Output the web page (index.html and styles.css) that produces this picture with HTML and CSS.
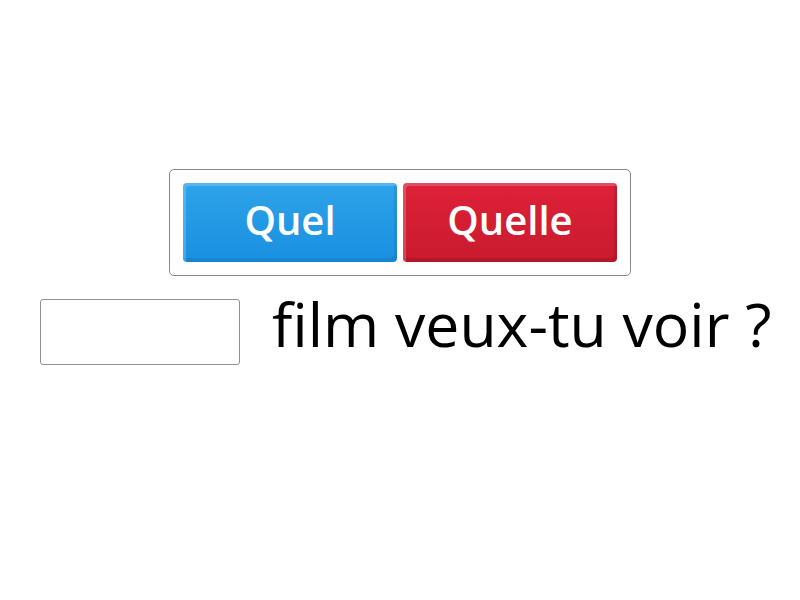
FILE: index.html
```html
<!DOCTYPE html>
<html>
<head>
<meta charset="utf-8">
<link rel="stylesheet" href="styles.css">
</head>
<body>
<div class="page">
  <div class="choices">
    <div class="btn blue">Quel</div>
    <div class="btn red">Quelle</div>
  </div>
  <div class="sentence">
    <div class="blank"></div>
    <div class="text">film veux-tu voir ?</div>
  </div>
</div>
</body>
</html>
```
FILE: styles.css
```css
html, body {
  margin: 0;
  background: #fff;
  font-family: "Open Sans", "Liberation Sans", sans-serif;
}
.page {
  width: 800px;
  height: 600px;
  display: flex;
  flex-direction: column;
  align-items: center;
  padding-top: 169px;
  box-sizing: border-box;
}
.choices {
  display: flex;
  gap: 6px;
  padding: 13px;
  border: 1px solid #8a8a8a;
  border-radius: 5px;
}
.btn {
  width: 214px;
  height: 79px;
  box-sizing: border-box;
  border-radius: 4px;
  color: #fff;
  font-weight: 600;
  font-size: 40px;
  display: flex;
  align-items: center;
  justify-content: center;
  padding-bottom: 7px;
}
.blue {
  background: linear-gradient(#2ea3ea, #1990e0);
  box-shadow: inset 3px 3px 0 rgba(255,255,255,0.2), inset -3px -4px 0 rgba(0,0,0,0.08);
}
.red {
  background: linear-gradient(#de2139, #c91a2d);
  box-shadow: inset 3px 3px 0 rgba(255,255,255,0.2), inset -3px -4px 0 rgba(0,0,0,0.1);
}
.sentence {
  align-self: flex-start;
  display: flex;
  align-items: flex-start;
  margin-top: 23px;
  margin-left: 40px;
}
.blank {
  width: 200px;
  height: 66px;
  box-sizing: border-box;
  border: 1px solid #909090;
  border-radius: 3px;
}
.text {
  margin-left: 32px;
  margin-top: -5px;
  font-size: 60.7px;
  color: #000;
  line-height: 1;
  white-space: nowrap;
}
```
